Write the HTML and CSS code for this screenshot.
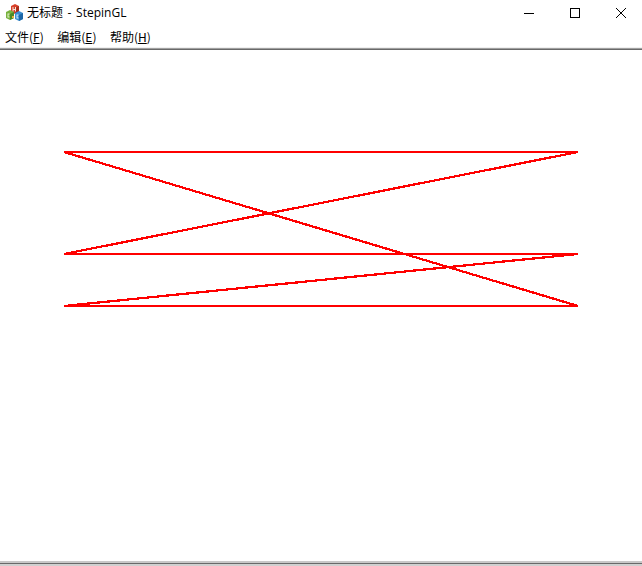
FILE: index.html
```html
<!DOCTYPE html>
<html lang="zh-CN">

<head>
    <meta charset="UTF-8">
    <title>无标题 - StepinGL</title>
    <link rel="stylesheet" href="styles.css">
</head>

<body>
    <div class="window">
        <!-- Title bar -->
        <div class="title-bar">
            <svg class="app-icon" width="17" height="17" viewBox="0 0 17 17">
                <path d="M5 2L9 0L13 2V8L9 10L5 8Z" fill="#d8402a"/>
                <path d="M9 4L13 2V8L9 10Z" fill="#a92c1a"/>
                <path d="M6.5 3H7.5V5H9V3H10V7.5H9V6H7.5V7.5H6.5Z" fill="#f6e6d8"/>
                <path d="M0 8L4 6L8 8V14L4 16L0 14Z" fill="#78b23e"/>
                <path d="M4 10L8 8V14L4 16Z" fill="#4c8a26"/>
                <path d="M9 9L13 7L17 9V15L13 17L9 15Z" fill="#3a8ed0"/>
                <path d="M13 11L17 9V15L13 17Z" fill="#1f68a8"/>
                <path d="M6 12H8V14H6Z" fill="#e6b23a"/>
                <path d="M1.5 9.5H3.5V10.5H2.5V12.5H3.5V13.5H1.5Z" fill="#e4f2cc"/>
                <path d="M10.5 10.5H12.5V11.5H11.5V13.5H12.5V14.5H10.5Z" fill="#d4ecfa"/>
            </svg>
            <span class="title-text">无标题 - StepinGL</span>
            <div class="window-buttons">
                <div class="window-button">
                    <svg width="12" height="12" viewBox="0 0 12 12"><path d="M1 6.5H11" stroke="#000" fill="none" shape-rendering="crispEdges"/></svg>
                </div>
                <div class="window-button">
                    <svg width="12" height="12" viewBox="0 0 12 12"><rect x="1.5" y="1.5" width="9" height="9" stroke="#000" fill="none" shape-rendering="crispEdges"/></svg>
                </div>
                <div class="window-button">
                    <svg width="12" height="12" viewBox="0 0 12 12"><path d="M1 1L11 11M11 1L1 11" stroke="#000" fill="none"/></svg>
                </div>
            </div>
        </div>

        <!-- Menu bar -->
        <div class="menu-bar">
            <span class="menu-item">文件(<u>F</u>)</span>
            <span class="menu-item">编辑(<u>E</u>)</span>
            <span class="menu-item">帮助(<u>H</u>)</span>
        </div>
        <div class="menu-edge"></div>

        <!-- GL canvas -->
        <div class="canvas">
            <svg class="drawing" width="642" height="511" viewBox="0 0 642 511">
                <path d="M64 102H578M64 204H578M64 256H578" fill="none" stroke="#ff0000" stroke-width="2" shape-rendering="crispEdges"/>
                <path d="M578 102L64 204M578 204L64 256M578 256L64 102" fill="none" stroke="#ff0000" stroke-width="2.25" shape-rendering="crispEdges"/>
            </svg>
        </div>

        <div class="status-edge"></div>
    </div>
</body>

</html>
```

FILE: styles.css
```css
html, body {
    margin: 0;
    padding: 0;
    background-color: #fff;
}

.window {
    width: 642px;
    height: 566px;
    display: flex;
    flex-direction: column;
    overflow: hidden;
    font-family: 'Noto Sans CJK SC', 'Open Sans', sans-serif;
    font-size: 12px;
    color: #000;
}

.title-bar {
    height: 25px;
    padding: 0 0 2px 6px;
    display: flex;
    align-items: center;
}

.app-icon {
    margin-right: 4px;
}

.title-text {
    flex: 1;
    font-family: 'Open Sans', 'Noto Sans CJK SC', sans-serif;
    word-spacing: 1.5px;
    line-height: 25px;
}

.window-buttons {
    display: flex;
    margin-right: -2px;
}

.window-button {
    width: 46px;
    height: 25px;
    display: flex;
    align-items: center;
    justify-content: center;
}

.menu-bar {
    height: 20px;
    display: flex;
    gap: 13.5px;
    padding-left: 5px;
    align-items: center;
    border-bottom: 1px solid #f0f0f0;
}

.menu-item {
    line-height: 20px;
}

.menu-edge {
    height: 0;
    border-top: 1px solid #a0a0a0;
    border-bottom: 1px solid #696969;
}

.canvas {
    flex: 1;
    background-color: #fff;
}

.drawing {
    display: block;
}

.status-edge {
    height: 1px;
    background-color: #d4d4d4;
    border-top: 2px solid #c8c8c8;
    border-bottom: 2px solid #d0d0d0;
    box-shadow: inset 0 1px 0 #696969;
}
```
